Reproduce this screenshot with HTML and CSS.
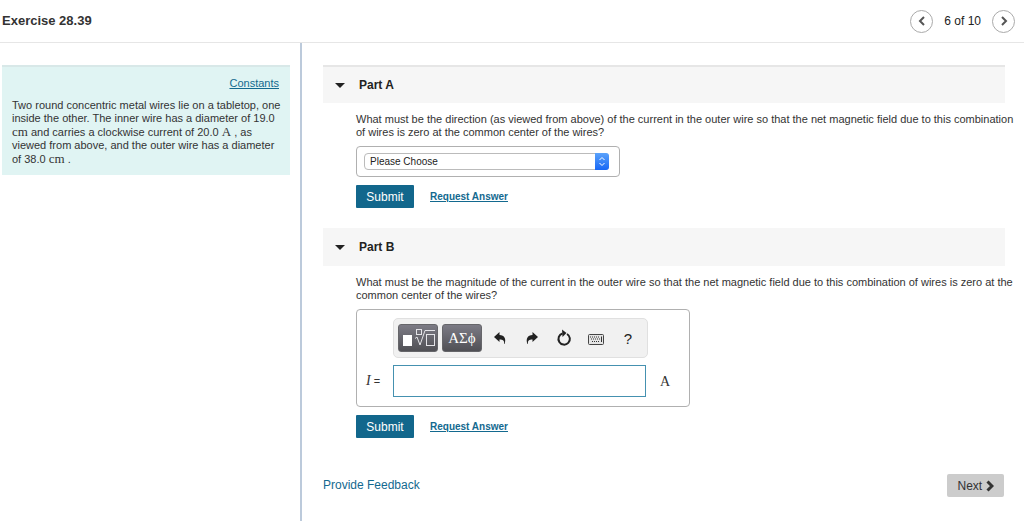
FILE: index.html
```html
<!DOCTYPE html>
<html lang="en">
<head>
  <meta charset="UTF-8">
  <meta name="viewport" content="width=device-width, initial-scale=1.0">
  <title>Exercise 28.39</title>
  <link rel="stylesheet" href="styles.css">
</head>
<body>
  <header class="top-bar">
    <h1>Exercise 28.39</h1>
    <nav class="pager">
      <button type="button" class="round" aria-label="Previous item">
        <svg width="10" height="12" viewBox="0 0 10 12"><path d="M7 2 L3 6 L7 10"/></svg>
      </button>
      <span>6 of 10</span>
      <button type="button" class="round" aria-label="Next item">
        <svg width="10" height="12" viewBox="0 0 10 12"><path d="M3 2 L7 6 L3 10"/></svg>
      </button>
    </nav>
  </header>

  <div class="content">
    <aside class="sidebar">
      <div class="problem">
        <a class="constants" href="#">Constants</a>
        <p>Two round concentric metal wires lie on a tabletop, one inside the other. The inner wire has a diameter of 19.0 <span class="unit">cm</span> and carries a clockwise current of 20.0 <span class="unit">A</span> , as viewed from above, and the outer wire has a diameter of 38.0 <span class="unit">cm</span> .</p>
      </div>
    </aside>

    <main>
      <!-- Part A -->
      <section class="part">
        <h2 class="part-title first"><span class="arrow"></span>Part A</h2>
        <div class="part-body">
          <p><label for="direction">What must be the direction (as viewed from above) of the current in the outer wire so that the net magnetic field due to this combination of wires is zero at the common center of the wires?</label></p>
          <div class="answer-box choice">
            <select id="direction">
              <option>Please Choose</option>
              <option>clockwise</option>
              <option>counterclockwise</option>
            </select>
            <svg class="stepper" width="14" height="16" viewBox="0 0 14 16"><path d="M4.500 6.500 L7 4 L9.500 6.500 M4.500 9.500 L7 12 L9.500 9.500"/></svg>
          </div>
          <div class="actions">
            <button type="button" class="submit">Submit</button>
            <a class="request" href="#">Request Answer</a>
          </div>
        </div>
      </section>

      <!-- Part B -->
      <section class="part">
        <h2 class="part-title"><span class="arrow"></span>Part B</h2>
        <div class="part-body">
          <p>What must be the magnitude of the current in the outer wire so that the net magnetic field due to this combination of wires is zero at the common center of the wires?</p>
          <div class="answer-box formula">
            <div class="toolbar">
              <button type="button" class="dark" aria-label="Templates">
                <svg width="38" height="26" viewBox="0 0 38 26">
                  <rect x="4" y="10" width="9" height="11" fill="#fff"/>
                  <g fill="none" stroke="#e4e4e8">
                    <rect x="17.500" y="4.500" width="5" height="5"/>
                    <path d="M16 13.500 L18 12 L21 20 L26 5.500 H36"/>
                    <rect x="27.500" y="9.500" width="8" height="11"/>
                  </g>
                </svg>
              </button>
              <button type="button" class="dark">ΑΣϕ</button>
              <button type="button" class="tool" aria-label="Undo">
                <svg width="14" height="14" viewBox="0 0 14 14"><path d="M1 6 L6.500 1 V4 C11.500 4 13.500 8 11.500 13 H11 C11.500 9.500 10 8.500 6.500 8.500 V11 Z"/></svg>
              </button>
              <button type="button" class="tool" aria-label="Redo">
                <svg width="14" height="14" viewBox="0 0 14 14"><path d="M13 6 L7.500 1 V4 C2.500 4 0.500 8 2.500 13 H3 C2.500 9.500 4 8.500 7.500 8.500 V11 Z"/></svg>
              </button>
              <button type="button" class="tool" aria-label="Reset">
                <svg width="16" height="18" viewBox="0 0 16 18"><path d="M11 5 A5.700 5.700 0 1 1 6.500 4.500" fill="none" stroke="#222" stroke-width="2"/><path d="M6 0.500 L10.500 4 L6.500 8 Z"/></svg>
              </button>
              <button type="button" class="tool" aria-label="Keyboard">
                <svg width="16" height="13" viewBox="0 0 16 13"><rect x="0.500" y="2.500" width="15" height="10" rx="1" fill="#e4e4e4" stroke="#444"/><path d="M2 5 H12 M3 7 H12 M4 9.500 H12" stroke="#333" stroke-dasharray="1 1"/><path d="M13.500 4.500 V10" stroke="#333"/></svg>
              </button>
              <button type="button" class="tool help" aria-label="Help">?</button>
            </div>
            <label class="var" for="current"><i>I</i> =</label>
            <input type="text" id="current">
            <span class="amps">A</span>
          </div>
          <div class="actions">
            <button type="button" class="submit">Submit</button>
            <a class="request" href="#">Request Answer</a>
          </div>
        </div>
      </section>

      <footer class="bottom">
        <a href="#">Provide Feedback</a>
        <button type="button" class="next">Next
          <svg width="8" height="12" viewBox="0 0 8 12"><path d="M1.500 1.500 L6 6 L1.500 10.500"/></svg>
        </button>
      </footer>
    </main>
  </div>
</body>
</html>
```

FILE: styles.css
```css
* {
  box-sizing: border-box;
}
body {
  margin: 0;
  min-height: 100vh;
  display: flex;
  flex-direction: column;
  font-family: "Liberation Sans", Arial, sans-serif;
  font-size: 11px;
  line-height: 13px;
  color: #333;
  background-color: #fff;
}
h1, h2, p {
  margin: 0;
}
button {
  font-family: inherit;
  padding: 0;
  border: none;
  cursor: pointer;
}
a {
  color: #13698f;
}

/* header */
.top-bar {
  display: flex;
  justify-content: space-between;
  align-items: center;
  height: 43px;
  padding: 0 9px 0 2px;
  border-bottom: 1px solid #e6e6e6;
}
h1 {
  font-size: 13px;
  line-height: 16px;
  color: #333;
}
.pager {
  display: flex;
  align-items: center;
  gap: 11px;
  font-size: 12px;
  line-height: 16px;
  color: #222;
}
.round {
  display: flex;
  justify-content: center;
  align-items: center;
  width: 23px;
  height: 23px;
  border: 1px solid #aaa;
  border-radius: 50%;
  background-color: #fff;
}
.round svg {
  fill: none;
  stroke: #555;
  stroke-width: 2;
}

/* columns */
.content {
  flex: 1;
  display: flex;
}
.sidebar {
  flex: 0 0 302px;
  padding: 22px 10px 0 2px;
  border-right: 2px solid #bccadb;
}
main {
  flex: 1;
  padding: 22px 7px 20px 21px;
}
.problem {
  padding: 10px 8px 9px 10px;
  border-top: 2px solid #d8e8e8;
  background-color: #e0f4f3;
}
.constants {
  display: block;
  margin: 0 3px 9px 0;
  text-align: right;
}
.unit {
  font-family: "Liberation Serif", serif;
  font-size: 13px;
}

/* parts */
.part {
  margin-bottom: 20px;
}
.part-title {
  display: flex;
  align-items: center;
  height: 38px;
  margin-right: 12px;
  padding-left: 12px;
  font-size: 12px;
  color: #222;
  background-color: #f6f6f6;
}
.part-title.first {
  border-top: 2px solid #e6e6e6;
}
.arrow {
  margin-right: 14px;
  border: 5px solid transparent;
  border-top-color: #222;
  border-bottom: none;
}
.part-body {
  padding: 10px 0 0 33px;
}
.answer-box {
  margin-top: 7px;
  border: 1px solid #b0b0b0;
  border-radius: 4px;
}
.choice {
  position: relative;
  width: 264px;
  padding: 6px 7px;
}
select {
  display: block;
  appearance: none;
  width: 245px;
  height: 17px;
  padding: 0 5px;
  border: 1px solid #bbb;
  border-radius: 4px;
  font-family: "Liberation Sans", Arial, sans-serif;
  font-size: 10px;
  color: #222;
  background-color: #fff;
}
.stepper {
  position: absolute;
  top: 6px;
  right: 10px;
  height: 17px;
  border-radius: 0 3px 3px 0;
  background: linear-gradient(#5ba3fb, #1767f5);
  fill: none;
  stroke: #fff;
  pointer-events: none;
}
.actions {
  display: flex;
  align-items: center;
  gap: 16px;
  margin-top: 8px;
}
.submit {
  width: 58px;
  height: 23px;
  border-radius: 1px;
  font-size: 12px;
  color: #fff;
  background-color: #12678c;
}
.request {
  font-weight: bold;
  font-size: 10px;
}

/* formula editor */
.formula {
  display: grid;
  grid-template-columns: 27px 255px auto;
  align-items: center;
  row-gap: 7px;
  width: 334px;
  padding: 8px 9px 9px;
}
.toolbar {
  grid-column: 2;
  display: flex;
  align-items: center;
  gap: 4px;
  height: 40px;
  padding-left: 4px;
  border: 1px solid #e0e0e0;
  border-radius: 5px;
  background-color: #f1f1f1;
}
.dark {
  width: 40px;
  height: 28px;
  border: 1px solid #66666a;
  border-radius: 3px;
  font-family: "Liberation Serif", serif;
  font-size: 15px;
  color: #fff;
  background: linear-gradient(#7c7b85, #505055);
}
.dark svg {
  display: block;
}
.tool {
  display: flex;
  justify-content: center;
  align-items: center;
  width: 28px;
  height: 28px;
  background: none;
  fill: #222;
}
.help {
  font-size: 15px;
  color: #222;
}
.var {
  grid-column: 1;
}
.var i {
  font-family: "Liberation Serif", serif;
  font-size: 14px;
}
.formula input {
  width: 253px;
  height: 32px;
  padding: 0 6px;
  border: 1px solid #4591b0;
  font-size: 14px;
}
.amps {
  padding-left: 12px;
  font-family: "Liberation Serif", serif;
  font-size: 14px;
}

/* footer */
.bottom {
  display: flex;
  justify-content: space-between;
  align-items: center;
  margin: 36px 13px 0 0;
  font-size: 12px;
}
.bottom a {
  text-decoration: none;
}
.next {
  width: 57px;
  height: 23px;
  border-radius: 2px;
  font-size: 12px;
  color: #333;
  background-color: #ccc;
}
.next svg {
  vertical-align: -2px;
  fill: none;
  stroke: #333;
  stroke-width: 3;
}
```
